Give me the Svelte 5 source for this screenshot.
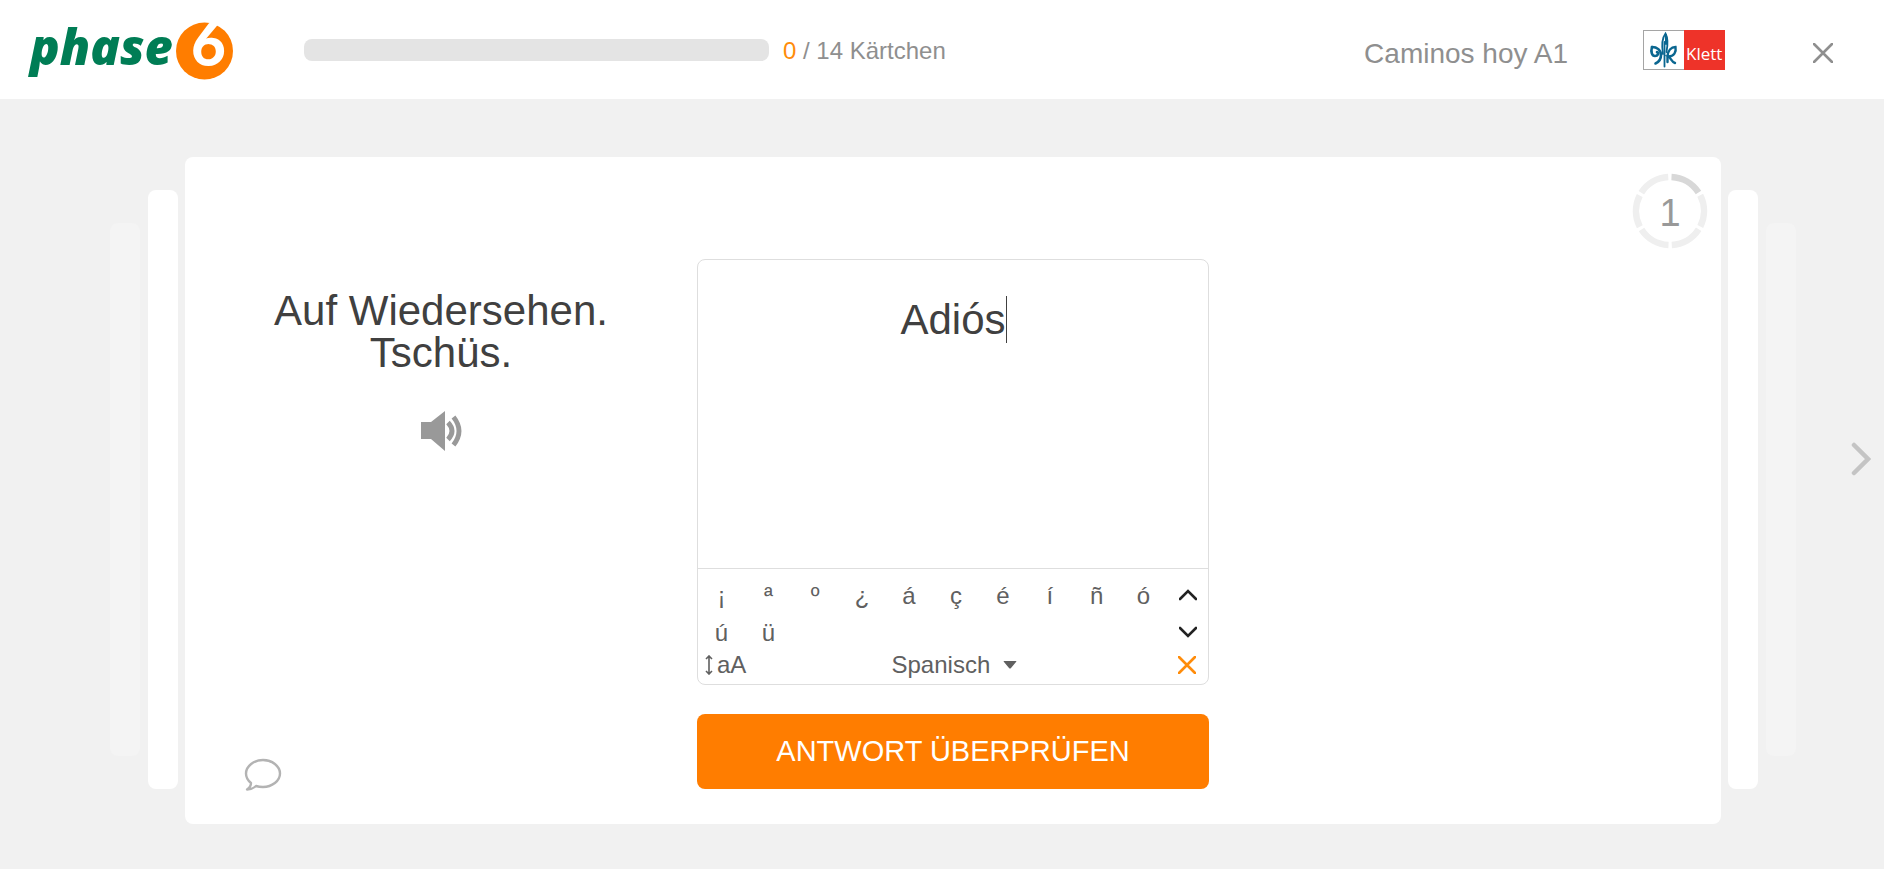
<script lang="ts">
	// States
	let answer = $state("Adiós");
	let language = $state("es");
	let done = $state(0);
	let showKeys = $state(true);
	let upperCase = $state(false);

	const total = 14;
	const phase = 1;
	const segments = [0, 1, 2, 3, 4, 5];
	const keys = ["¡", "ª", "º", "¿", "á", "ç", "é", "í", "ñ", "ó", "ú", "ü"];

	let visibleKeys = $derived(
		keys.map((key) => (upperCase ? key.toUpperCase() : key)),
	);

	// Functions
	function addKey(key: string) {
		answer += key;
	}

	function checkAnswer() {
		if (done < total) done += 1;
	}
</script>

<div class="page">
	<header>
		<svg class="logo" viewBox="0 -19 206 96" role="img" aria-label="phase6">
			<text class="word" x="2" y="44">phase</text>
			<circle cx="176.500" cy="30" r="28.500" fill="#ff7d00" />
			<text class="six" x="163" y="45">6</text>
			<circle cx="180.500" cy="30" r="6" fill="#ff7d00" />
		</svg>

		<div class="progress">
			<div class="bar" style="width: {(done / total) * 100}%"></div>
		</div>
		<p class="count"><span>{done}</span> / {total} Kärtchen</p>

		<h1>Caminos hoy A1</h1>

		<svg class="klett" viewBox="0 0 82 40" role="img" aria-label="Klett">
			<rect x="0.5" y="0.5" width="81" height="39" fill="#fff" stroke="#a5a5a5" />
			<rect x="41" width="41" height="40" fill="#ee3329" />
			<g fill="none" stroke="#0a6690" stroke-linecap="round">
				<path d="M21.500 36.500V12" stroke-width="1.800" />
				<path d="M20 24C18.500 15 19 8 22.500 3.500C25 8 25 14 23.500 22" stroke-width="1.800" />
				<path d="M23 5V14" stroke-width="2" />
				<path d="M9 17C14 17 18 20 18 25C18 29 16 32 12.500 33.500" stroke-width="2.600" />
				<path d="M9 17C7.500 22 9 26 12 26C15 26 16 23 14 22" stroke-width="2.600" />
				<path d="M24.500 32V26C25 21 28 17 32.500 17C33.500 22 31 26.500 25.500 26.500C28 28 28.500 32 32 33" stroke-width="2.400" />
			</g>
			<text x="43" y="30">Klett</text>
		</svg>

		<button class="close" aria-label="Schließen">
			<svg viewBox="0 0 20 20">
				<path d="M1 1L19 19M19 1L1 19" />
			</svg>
		</button>
	</header>

	<main>
		<div class="stack far"></div>
		<div class="stack near"></div>

		<section class="card">
			<div class="question">
				<h2>Auf Wiedersehen.<br />Tschüs.</h2>
				<button class="speaker" aria-label="Anhören">
					<svg viewBox="0 0 42 42">
						<path d="M1 12H11L25 1V41L11 29H1Z" fill="#999" />
						<path
							d="M28 12.500Q36 21 28 29.500M33.500 7Q44.500 21 33.500 35"
							fill="none"
							stroke="#999"
							stroke-width="4.800"
						/>
					</svg>
				</button>
			</div>

			<div class="answer">
				<div class="box">
					<div class="field">
						<textarea bind:value={answer} aria-label="Antwort" spellcheck="false"></textarea>
						<div class="mirror" aria-hidden="true">{answer}<i></i></div>
					</div>

					<div class="keyboard">
						{#if showKeys}
							<div class="rows">
								<div class="keys">
									{#each visibleKeys as key}
										<button onclick={() => addKey(key)}>{key}</button>
									{/each}
								</div>
								<div class="scroll">
									<button aria-label="Nach oben">
										<svg viewBox="0 0 18 12"><path d="M1 10L9 2L17 10" /></svg>
									</button>
									<button aria-label="Nach unten">
										<svg viewBox="0 0 18 12"><path d="M1 2L9 10L17 2" /></svg>
									</button>
								</div>
							</div>
						{/if}

						<div class="tools">
							<button class="case" onclick={() => (upperCase = !upperCase)}>
								<svg viewBox="0 0 8 20">
									<path d="M4 1V19M1 4L4 1L7 4M1 16L4 19L7 16" />
								</svg>
								aA
							</button>
							<div class="language">
								<select bind:value={language} aria-label="Sprache">
									<option value="es">Spanisch</option>
									<option value="de">Deutsch</option>
								</select>
								<svg viewBox="0 0 14 8"><path d="M1 0H13Q14 0 13 1L8 7Q7 8 6 7L1 1Q0 0 1 0Z" /></svg>
							</div>
							<button
								class="hide"
								aria-label="Tastatur ausblenden"
								onclick={() => (showKeys = !showKeys)}
							>
								<svg viewBox="0 0 18 18"><path d="M1 1L17 17M17 1L1 17" /></svg>
							</button>
						</div>
					</div>
				</div>

				<button class="check" onclick={checkAnswer}>ANTWORT ÜBERPRÜFEN</button>
			</div>

			<div class="badge">
				<svg viewBox="0 0 76 76">
					{#each segments as n}
						<path
							class:active={n < phase}
							d="M39.500 4A34 34 0 0 1 66.500 19.500"
							transform="rotate({n * 60} 38 38)"
						/>
					{/each}
				</svg>
				<span>{phase}</span>
			</div>

			<button class="comment" aria-label="Kommentar">
				<svg viewBox="0 0 38 34">
					<path
						d="M19 2C28 2 36 8 36 15.500C36 23 28 29 19 29Q15 29 12 28Q9 31 3 31.500Q7 29 7 25Q2 21 2 15.500C2 8 10 2 19 2Z"
					/>
				</svg>
			</button>
		</section>

		<div class="stack near"></div>
		<div class="stack far"></div>

		<button class="next" aria-label="Weiter">
			<svg viewBox="0 0 20 34"><path d="M3 3L17 17L3 31" /></svg>
		</button>
	</main>
</div>

<style>
	:global(body) {
		margin: 0;
		background: #f1f1f1;
	}

	.page {
		min-height: 100vh;
		font-family: "Liberation Sans", Arial, sans-serif;
		color: #404040;
	}

	button {
		padding: 0;
		border: 0;
		background: none;
		font: inherit;
		color: inherit;
		cursor: pointer;
	}

	svg {
		display: block;
		flex-shrink: 0;
	}

	header {
		display: flex;
		align-items: center;
		box-sizing: border-box;
		height: 99px;
		padding: 1px 41px 0 28px;
		background: #fff;
		color: #8f8f8f;
	}

	.logo {
		width: 206px;
		height: 96px;
		margin-right: 70px;
	}

	.word {
		font-family: "Open Sans", sans-serif;
		font-size: 49px;
		font-weight: 800;
		font-style: italic;
		fill: #007d55;
	}

	.six {
		font-family: Lato, sans-serif;
		font-size: 60px;
		font-weight: 900;
		fill: #fff;
	}

	.progress {
		flex: 0 1 465px;
		height: 22px;
		border-radius: 8px;
		background: #e4e4e4;
		overflow: hidden;
	}

	.bar {
		height: 100%;
		background: #ff7d00;
	}

	.count {
		margin: 0 0 0 14px;
		padding-top: 2px;
		font-size: 24px;
		white-space: nowrap;

		span {
			color: #ff8c0a;
		}
	}

	h1 {
		margin: 0 75px 0 auto;
		padding-top: 8px;
		font-size: 28px;
		font-weight: 400;
		white-space: nowrap;
	}

	.klett {
		width: 82px;
		height: 40px;

		text {
			font-family: "Open Sans", sans-serif;
			font-size: 17px;
			fill: #fff;
		}
	}

	.close {
		display: grid;
		place-items: center;
		width: 40px;
		height: 40px;
		margin-left: 78px;
		padding-top: 5px;

		svg {
			width: 20px;
			height: 20px;
			fill: none;
			stroke: #8f8f8f;
			stroke-width: 2.6;
			stroke-linecap: round;
		}
	}

	main {
		position: relative;
		display: flex;
		gap: 8px;
		padding: 58px 88px 45px 110px;
	}

	.stack {
		flex: 0 0 30px;
		border-radius: 8px;
	}

	.near {
		margin: 33px 0 35px;
		background: #fff;
	}

	.far {
		margin: 66px 0 68px;
		background: #f4f4f4;
	}

	.card {
		position: relative;
		flex: 1;
		display: grid;
		grid-template-columns: repeat(3, 1fr);
		margin: 0 -1px;
		padding: 102px 0 35px;
		border-radius: 8px;
		background: #fff;
	}

	.question {
		display: flex;
		flex-direction: column;
		align-items: center;
		gap: 36px;
		padding-top: 31px;
	}

	h2 {
		margin: 0;
		font-size: 42px;
		font-weight: 400;
		line-height: 42px;
		text-align: center;
	}

	.speaker svg {
		width: 42px;
		height: 42px;
	}

	.answer {
		display: flex;
		flex-direction: column;
		gap: 29px;
	}

	.box {
		border: 1px solid #dedede;
		border-radius: 8px;
	}

	.field {
		position: relative;
	}

	textarea,
	.mirror {
		display: block;
		box-sizing: border-box;
		width: 100%;
		height: 308px;
		padding: 36px 20px 0;
		border: 0;
		background: none;
		font: 42px/47px "Liberation Sans", Arial, sans-serif;
		color: #404040;
		text-align: center;
	}

	textarea {
		resize: none;
		outline: none;
		overflow: hidden;
		caret-color: transparent;
	}

	/* Text cursor drawn after the last letter */
	.mirror {
		position: absolute;
		inset: 0;
		color: transparent;
		white-space: pre-wrap;
		pointer-events: none;

		i {
			display: inline-block;
			width: 1px;
			height: 47px;
			margin-right: -1px;
			background: #404040;
			vertical-align: top;
		}
	}

	.keyboard {
		padding: 8px 0 6px;
		border-top: 1px solid #dedede;
		font-size: 24px;
		color: #606060;
	}

	.rows {
		display: flex;
	}

	.keys {
		flex: 1;
		display: grid;
		grid-template-columns: repeat(10, 1fr);
		grid-auto-rows: 37px;
	}

	.scroll {
		display: grid;
		grid-auto-rows: 37px;
		width: 41px;

		button {
			display: grid;
			place-items: center;
			padding: 0 0 2px;
		}

		svg {
			width: 18px;
			height: 12px;
			fill: none;
			stroke: #222;
			stroke-width: 2.6;
			stroke-linecap: round;
		}
	}

	.tools {
		display: grid;
		grid-template-columns: 1fr auto 1fr;
		align-items: center;
		height: 27px;
		line-height: 27px;
	}

	.case {
		display: flex;
		align-items: center;
		gap: 4px;
		justify-self: start;
		margin-left: 7px;

		svg {
			width: 8px;
			height: 20px;
			fill: none;
			stroke: #606060;
			stroke-width: 1.6;
		}
	}

	.language {
		display: flex;
		align-items: center;
		gap: 12px;
		padding-left: 2px;

		svg {
			width: 14px;
			height: 8px;
			fill: #606060;
		}
	}

	select {
		appearance: none;
		height: 27px;
		padding: 0;
		border: 0;
		background: none;
		font: inherit;
		line-height: 27px;
		color: inherit;
	}

	.hide {
		justify-self: end;
		margin-right: 12px;

		svg {
			width: 18px;
			height: 18px;
			fill: none;
			stroke: #ff8c0a;
			stroke-width: 2.6;
			stroke-linecap: round;
		}
	}

	.check {
		height: 75px;
		border-radius: 8px;
		background: #ff7d00;
		font-size: 29px;
		color: #fff;
	}

	.badge {
		position: absolute;
		top: 16px;
		right: 13px;
		display: grid;
		place-items: center;
		font-size: 38px;
		color: #999;

		svg,
		span {
			grid-area: 1 / 1;
		}

		span {
			padding-top: 4px;
		}

		svg {
			width: 76px;
			height: 76px;
			fill: none;
			stroke: #efefef;
			stroke-width: 6.5;
		}

		.active {
			stroke: #d8d8d8;
		}
	}

	.comment {
		position: absolute;
		left: 59px;
		bottom: 32px;

		svg {
			width: 38px;
			height: 34px;
			fill: none;
			stroke: #b3b3b3;
			stroke-width: 2.4;
			stroke-linejoin: round;
		}
	}

	.next {
		position: absolute;
		right: 13px;
		top: 343px;

		svg {
			width: 20px;
			height: 34px;
			fill: none;
			stroke: #c4c4c4;
			stroke-width: 4.5;
			stroke-linecap: round;
		}
	}
</style>
